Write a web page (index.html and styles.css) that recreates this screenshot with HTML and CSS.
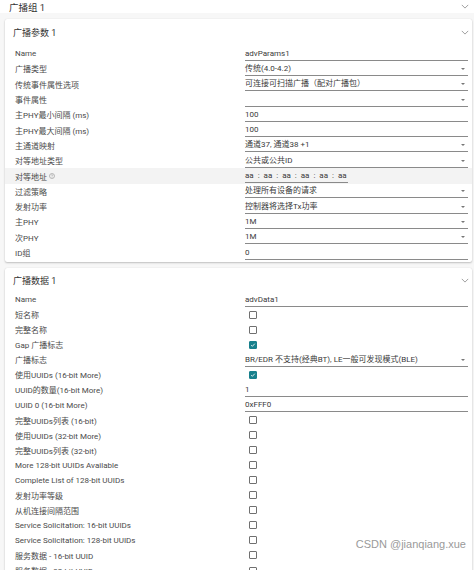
FILE: index.html
```html
<!DOCTYPE html>
<html>
<head>
<meta charset="utf-8">
<link rel="stylesheet" href="styles.css">
</head>
<body>
<div class="page">
  <div class="group-head">
    <span>广播组 1</span>
    <svg class="chev" viewBox="0 0 10 6" width="8" height="5"><path d="M1 1l4 4 4-4" fill="none" stroke="#888" stroke-width="1"/></svg>
  </div>

  <section class="card card1">
    <div class="card-head">
      <span>广播参数 1</span>
      <svg class="chev" viewBox="0 0 10 6" width="8" height="5"><path d="M1 1l4 4 4-4" fill="none" stroke="#888" stroke-width="1"/></svg>
    </div>
    <div class="row"><span class="lbl">Name</span><span class="val">advParams1</span></div>
    <div class="row"><span class="lbl">广播类型</span><span class="val sel">传统(4.0-4.2)<i class="arr"></i></span></div>
    <div class="row"><span class="lbl">传统事件属性选项</span><span class="val sel">可连接可扫描广播（配对广播包）<i class="arr"></i></span></div>
    <div class="row"><span class="lbl">事件属性</span><span class="val sel"><i class="arr"></i></span></div>
    <div class="row"><span class="lbl">主PHY最小间隔 (ms)</span><span class="val">100</span></div>
    <div class="row"><span class="lbl">主PHY最大间隔 (ms)</span><span class="val">100</span></div>
    <div class="row"><span class="lbl">主通道映射</span><span class="val sel">通道37, 通道38 +1<i class="arr"></i></span></div>
    <div class="row"><span class="lbl">对等地址类型</span><span class="val sel">公共或公共ID<i class="arr"></i></span></div>
    <div class="row hl"><span class="lbl">对等地址 <svg class="info" viewBox="0 0 10 10" width="6" height="6"><circle cx="5" cy="5" r="4.2" fill="none" stroke="#888" stroke-width="0.9"/><path d="M3.8 4a1.2 1.2 0 1 1 1.6 1.1c-.3.1-.4.4-.4.7" fill="none" stroke="#888" stroke-width="0.8"/><circle cx="5" cy="7.3" r="0.5" fill="#888"/></svg></span><span class="val addr">aa&nbsp;&nbsp;:&nbsp;&nbsp;aa&nbsp;&nbsp;:&nbsp;&nbsp;aa&nbsp;&nbsp;:&nbsp;&nbsp;aa&nbsp;&nbsp;:&nbsp;&nbsp;aa&nbsp;&nbsp;:&nbsp;&nbsp;aa</span></div>
    <div class="row"><span class="lbl">过滤策略</span><span class="val sel">处理所有设备的请求<i class="arr"></i></span></div>
    <div class="row"><span class="lbl">发射功率</span><span class="val sel">控制器将选择Tx功率<i class="arr"></i></span></div>
    <div class="row"><span class="lbl">主PHY</span><span class="val sel">1M<i class="arr"></i></span></div>
    <div class="row"><span class="lbl">次PHY</span><span class="val sel">1M<i class="arr"></i></span></div>
    <div class="row"><span class="lbl">ID组</span><span class="val">0</span></div>
  </section>

  <section class="card card2">
    <div class="card-head">
      <span>广播数据 1</span>
      <svg class="chev" viewBox="0 0 10 6" width="8" height="5"><path d="M1 1l4 4 4-4" fill="none" stroke="#888" stroke-width="1"/></svg>
    </div>
    <div class="row"><span class="lbl">Name</span><span class="val">advData1</span></div>
    <div class="row"><span class="lbl">短名称</span><span class="cb"></span></div>
    <div class="row"><span class="lbl">完整名称</span><span class="cb"></span></div>
    <div class="row"><span class="lbl">Gap 广播标志</span><span class="cb on"><svg viewBox="0 0 10 10" width="8" height="8"><path d="M2 5.2l2 2 4-4.4" fill="none" stroke="#fff" stroke-width="1.4"/></svg></span></div>
    <div class="row"><span class="lbl">广播标志</span><span class="val sel">BR/EDR 不支持(经典BT), LE一般可发现模式(BLE)<i class="arr"></i></span></div>
    <div class="row"><span class="lbl">使用UUIDs (16-bit More)</span><span class="cb on"><svg viewBox="0 0 10 10" width="8" height="8"><path d="M2 5.2l2 2 4-4.4" fill="none" stroke="#fff" stroke-width="1.4"/></svg></span></div>
    <div class="row"><span class="lbl">UUID的数量(16-bit More)</span><span class="val">1</span></div>
    <div class="row"><span class="lbl">UUID 0 (16-bit More)</span><span class="val">0xFFF0</span></div>
    <div class="row"><span class="lbl">完整UUIDs列表 (16-bit)</span><span class="cb"></span></div>
    <div class="row"><span class="lbl">使用UUIDs (32-bit More)</span><span class="cb"></span></div>
    <div class="row"><span class="lbl">完整UUIDs列表 (32-bit)</span><span class="cb"></span></div>
    <div class="row"><span class="lbl">More 128-bit UUIDs Available</span><span class="cb"></span></div>
    <div class="row"><span class="lbl">Complete List of 128-bit UUIDs</span><span class="cb"></span></div>
    <div class="row"><span class="lbl">发射功率等级</span><span class="cb"></span></div>
    <div class="row"><span class="lbl">从机连接间隔范围</span><span class="cb"></span></div>
    <div class="row"><span class="lbl">Service Solicitation: 16-bit UUIDs</span><span class="cb"></span></div>
    <div class="row"><span class="lbl">Service Solicitation: 128-bit UUIDs</span><span class="cb"></span></div>
    <div class="row"><span class="lbl">服务数据 - 16-bit UUID</span><span class="cb"></span></div>
    <div class="row"><span class="lbl">服务数据 - 32-bit UUID</span><span class="cb"></span></div>
  </section>

  <div class="watermark">CSDN @jianqiang.xue</div>
</div>
</body>
</html>
```

FILE: styles.css
```css
html, body {
  margin: 0;
  padding: 0;
  background: #fff;
}
body {
  font-family: Roboto, "Noto Sans CJK SC", sans-serif;
  font-size: 8px;
  color: #444;
  width: 474px;
  height: 570px;
  overflow: hidden;
}
.page {
  position: relative;
  height: 570px;
  background: #f7f7f7;
}
.group-head {
  height: 13px;
  background: #fff;
  display: flex;
  align-items: center;
  justify-content: space-between;
  padding: 0 5px 0 9px;
  font-size: 9.5px;
  color: #333;
}
.chev {
  display: block;
}
.card {
  background: #fff;
  margin: 0 2px 0 5px;
  box-shadow: 0 1px 2px rgba(0,0,0,0.22), 0 0 1px rgba(0,0,0,0.12);
  border-radius: 2px;
}
.card1 {
  margin-top: 6px;
  padding-bottom: 2px;
}
.card2 {
  margin-top: 6px;
}
.card-head {
  height: 24px;
  display: flex;
  align-items: center;
  justify-content: space-between;
  padding: 0 3px 0 8px;
  font-size: 9px;
  color: #333;
}
.card1 .card-head { height: 27px; }
.row {
  display: grid;
  grid-template-columns: 230px 1fr;
  align-items: center;
  padding: 0 4px 0 10px;
}
.card1 .row { height: 15.3px; }
.card2 .row { height: 15.05px; }
.row.hl {
  background: #f3f3f3;
}
.lbl {
  color: #4a4a4a;
  white-space: nowrap;
  display: flex;
  align-items: center;
  gap: 2px;
}
.info { display: block; }
.val {
  position: relative;
  height: 12px;
  line-height: 12px;
  border-bottom: 1px solid #8a8a8a;
  color: #3a3a3a;
  white-space: nowrap;
  padding-top: 1px;
}
.val.addr {
  justify-self: start;
  padding-right: 1px;
}
.arr {
  position: absolute;
  right: 3px;
  top: 6px;
  width: 0;
  height: 0;
  border-left: 2.5px solid transparent;
  border-right: 2.5px solid transparent;
  border-top: 2.5px solid #777;
}
.cb {
  width: 8px;
  height: 8px;
  margin-left: 4px;
  border: 1px solid #707070;
  border-radius: 1px;
  box-sizing: border-box;
  display: flex;
  align-items: center;
  justify-content: center;
}
.cb.on {
  background: #17808c;
  border-color: #17808c;
}
.cb svg { display: block; }
.watermark {
  position: absolute;
  right: 8px;
  top: 538px;
  font-size: 11px;
  color: #9a9a9a;
  font-family: "Liberation Sans", Arial, sans-serif;
}
```
